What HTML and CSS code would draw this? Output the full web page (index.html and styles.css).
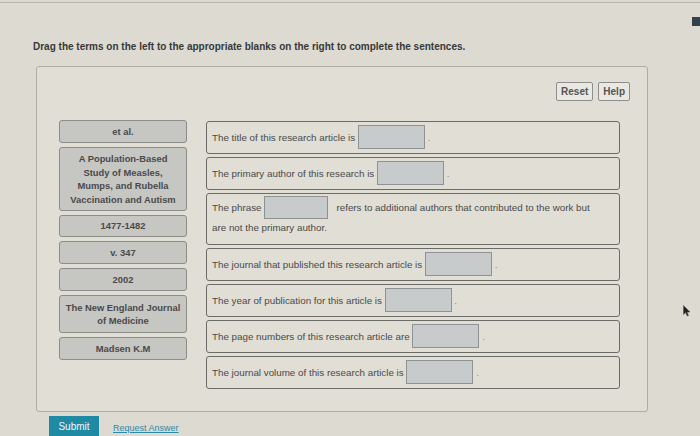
FILE: index.html
```html
<!DOCTYPE html>
<html>
<head>
<meta charset="utf-8">
<link rel="stylesheet" href="styles.css">
</head>
<body>
<div class="topline"></div>
<p class="instructions">Drag the terms on the left to the appropriate blanks on the right to complete the sentences.</p>
<div class="panel">
  <div class="toolbar">
    <button class="tool-btn">Reset</button>
    <button class="tool-btn">Help</button>
  </div>
  <div class="workspace">
    <div class="terms">
      <div class="term h23">et al.</div>
      <div class="term h64">A Population-Based Study of Measles, Mumps, and Rubella Vaccination and Autism</div>
      <div class="term h22">1477-1482</div>
      <div class="term h23">v. 347</div>
      <div class="term h23">2002</div>
      <div class="term h38">The New England Journal of Medicine</div>
      <div class="term h23">Madsen K.M</div>
    </div>
    <div class="sentences">
      <div class="sentence">The title of this research article is <span class="blank"></span> <span class="dot">.</span></div>
      <div class="sentence">The primary author of this research is <span class="blank"></span> <span class="dot">.</span></div>
      <div class="sentence tall"><span class="line">The phrase <span class="blank"></span> &nbsp; refers to additional authors that contributed to the work but</span><span class="line">are not the primary author.</span></div>
      <div class="sentence">The journal that published this research article is <span class="blank"></span> <span class="dot">.</span></div>
      <div class="sentence">The year of publication for this article is <span class="blank"></span> <span class="dot">.</span></div>
      <div class="sentence">The page numbers of this research article are <span class="blank"></span> <span class="dot">.</span></div>
      <div class="sentence">The journal volume of this research article is <span class="blank"></span> <span class="dot">.</span></div>
    </div>
  </div>
</div>
<div class="actions">
  <button class="submit">Submit</button>
  <a class="request" href="#">Request Answer</a>
</div>
<div class="corner-mark"></div>
<svg class="cursor" width="8" height="12" viewBox="0 0 8 12"><path d="M0.5 0.5 L0.5 9.5 L2.6 7.6 L4.2 11 L5.5 10.4 L4 7.1 L7 7 Z" fill="#222" stroke="#555" stroke-width="0.6"/></svg>
</body>
</html>
```
FILE: styles.css
```css
html, body {
  margin: 0;
  padding: 0;
}
body {
  width: 700px;
  height: 436px;
  overflow: hidden;
  background: #dddbd1;
  font-family: "Liberation Sans", Arial, sans-serif;
  color: #3d3d3d;
  position: relative;
}
.topline {
  height: 2px;
  border-bottom: 1px solid #b9b7ad;
}
.instructions {
  margin: 38px 0 0 33px;
  font-size: 10px;
  font-weight: bold;
  line-height: 12px;
  color: #383838;
}
.panel {
  margin: 13px 0 0 36px;
  width: 612px;
  height: 346px;
  border: 1px solid #aeaca3;
  border-radius: 3px;
  background: #e0ded5;
  box-sizing: border-box;
}
.toolbar {
  display: flex;
  justify-content: flex-end;
  gap: 5px;
  padding: 15px 17px 0 0;
}
.tool-btn {
  font-family: "Liberation Sans", Arial, sans-serif;
  font-size: 10px;
  font-weight: bold;
  color: #555;
  background: #e9e8e2;
  border: 1px solid #8e8e8a;
  border-radius: 2px;
  height: 19px;
  padding: 0 4px;
}
.workspace {
  display: flex;
  gap: 19px;
  padding: 19px 0 0 22px;
}
.terms {
  width: 128px;
  display: flex;
  flex-direction: column;
  gap: 4px;
}
.term {
  background: #c6c6c3;
  border: 1px solid #8c8c89;
  border-radius: 3px;
  box-sizing: border-box;
  font-size: 9.4px;
  font-weight: bold;
  color: #4a4a4a;
  text-align: center;
  line-height: 13.5px;
  display: flex;
  align-items: center;
  justify-content: center;
  padding: 0 4px;
}
.h22 { height: 22px; }
.h23 { height: 23px; }
.h38 { height: 38px; }
.h64 { height: 64px; padding: 0 10px; }
.sentences {
  width: 414px;
  display: flex;
  flex-direction: column;
  gap: 3px;
  padding-top: 1px;
}
.sentence {
  height: 33px;
  box-sizing: border-box;
  border: 1.5px solid #6b6b68;
  border-radius: 3px;
  font-size: 9.8px;
  color: #4a4a4a;
  padding: 3px 5px;
  line-height: 25px;
  white-space: nowrap;
}
.sentence.tall {
  height: 52px;
  padding-top: 2px;
  display: flex;
  flex-direction: column;
}
.line {
  display: block;
  line-height: 24px;
}
.line + .line {
  line-height: 16px;
}
.blank {
  display: inline-block;
  vertical-align: middle;
  width: 67px;
  height: 24px;
  box-sizing: border-box;
  background: #c8cbcc;
  border: 1px solid #8f9292;
  margin-top: -2px;
}
.tall .blank {
  height: 23px;
  width: 64px;
}
.dot {
  color: #888;
}
.actions {
  display: flex;
  align-items: flex-end;
  gap: 14px;
  margin: 4px 0 0 49px;
}
.submit {
  width: 50px;
  height: 21px;
  border: none;
  background: #1f8aa4;
  color: #f2f6f7;
  font-family: "Liberation Sans", Arial, sans-serif;
  font-size: 10px;
  padding: 0;
}
.request {
  font-size: 9px;
  color: #2c8aa6;
  text-decoration: underline;
  line-height: 12px;
  margin-bottom: 3px;
}
.corner-mark {
  position: absolute;
  left: 692px;
  top: 17px;
  width: 8px;
  height: 9px;
  background: #34424c;
}
.cursor {
  position: absolute;
  left: 683px;
  top: 305px;
}
```
